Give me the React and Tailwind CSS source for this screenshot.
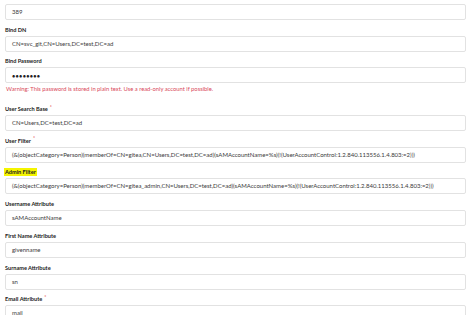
const fields = [
  { label: 'Port', required: true, value: '389' },
  { label: 'Bind DN', value: 'CN=svc_git,CN=Users,DC=test,DC=ad' },
  { label: 'Bind Password', value: '••••••••', password: true },
  { label: 'User Search Base', required: true, value: 'CN=Users,DC=test,DC=ad' },
  {
    label: 'User Filter',
    required: true,
    value: '(&(objectCategory=Person)(memberOf=CN=gitea,CN=Users,DC=test,DC=ad)(sAMAccountName=%s)(!(UserAccountControl:1.2.840.113556.1.4.803:=2)))',
  },
  {
    label: 'Admin Filter',
    highlight: true,
    value: '(&(objectCategory=Person)(memberOf=CN=gitea_admin,CN=Users,DC=test,DC=ad)(sAMAccountName=%s)(!(UserAccountControl:1.2.840.113556.1.4.803:=2)))',
  },
  { label: 'Username Attribute', value: 'sAMAccountName' },
  { label: 'First Name Attribute', value: 'givenname' },
  { label: 'Surname Attribute', value: 'sn' },
  { label: 'Email Attribute', required: true, value: 'mail' },
]

function Field({ f }) {
  return (
    <div className="flex flex-col">
      <div className="flex items-center h-[8px] mb-[2px]">
        <span
          className={
            'text-[5.6px] font-bold leading-[8px] text-[#222] ' +
            (f.highlight ? 'bg-[#f5f500] px-[1px] -ml-[1px]' : '')
          }
        >
          {f.label}
        </span>
        {f.required && (
          <span className="text-[5px] text-[#db2828] ml-[2px] -mt-[4px] leading-none">*</span>
        )}
      </div>
      <div className="h-[16px] border border-[#e2e2e2] rounded-[2px] bg-white flex items-center px-[6px] overflow-hidden">
        {f.password ? (
          <span className="text-[5.6px] tracking-[0.3px] text-[#222] leading-none font-bold">{f.value}</span>
        ) : (
          <span className="text-[6px] text-[#3a3a3a] leading-none whitespace-nowrap">{f.value}</span>
        )}
      </div>
    </div>
  )
}

export default function App() {
  return (
    <div className="w-[474px] h-[315px] overflow-hidden bg-white font-['Lato','Noto_Sans',sans-serif]">
      <div className="pl-[5px] pr-[8px] -mt-[6px] flex flex-col gap-[5.7px]">
        {fields.map((f, i) => (
          <div key={i}>
            <Field f={f} />
            {f.password && (
              <p className="mt-[2px] mb-[6px] text-[5.8px] leading-[8px] text-[#d9485a] pl-[1px]">
                Warning: This password is stored in plain text. Use a read-only account if possible.
              </p>
            )}
          </div>
        ))}
      </div>
    </div>
  )
}
